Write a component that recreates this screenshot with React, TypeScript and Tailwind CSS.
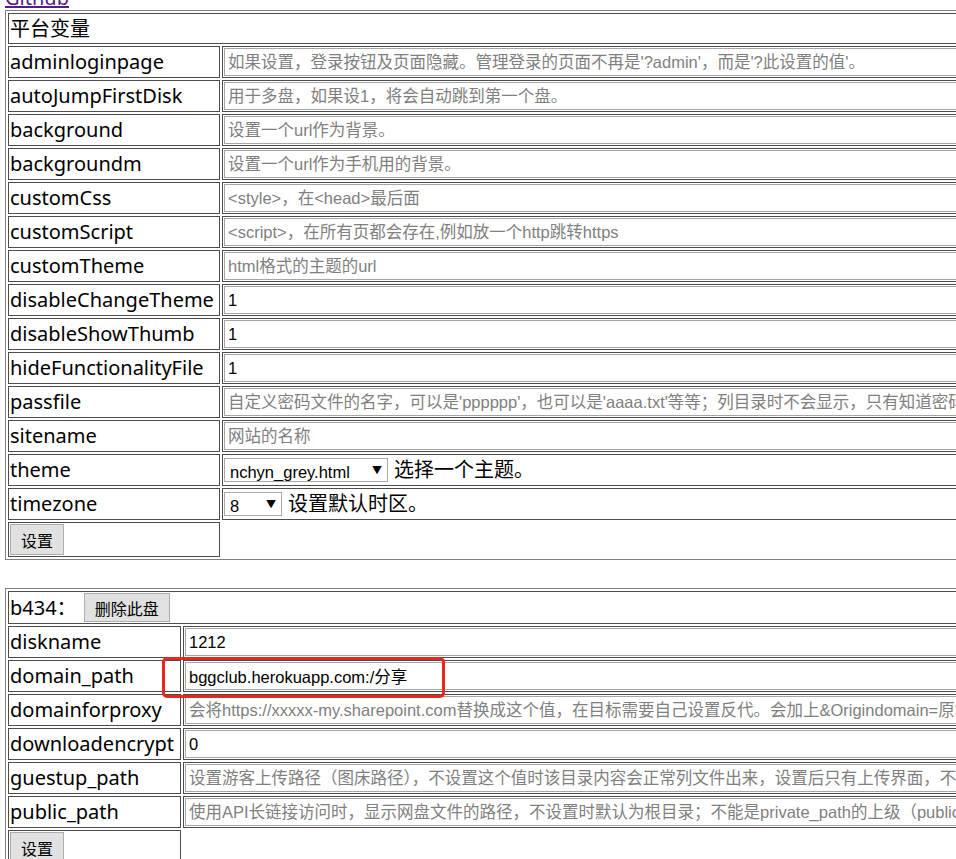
import * as React from 'react';

// types
type SettingRow = {
    name: string;
    value?: string;
    placeholder?: string;
};

const platformRows: SettingRow[] = [
    {
        name: 'adminloginpage',
        placeholder:
            "如果设置，登录按钮及页面隐藏。管理登录的页面不再是'?admin'，而是'?此设置的值'。"
    },
    {
        name: 'autoJumpFirstDisk',
        placeholder: '用于多盘，如果设1，将会自动跳到第一个盘。'
    },
    { name: 'background', placeholder: '设置一个url作为背景。' },
    { name: 'backgroundm', placeholder: '设置一个url作为手机用的背景。' },
    { name: 'customCss', placeholder: '<style>，在<head>最后面' },
    {
        name: 'customScript',
        placeholder: '<script>，在所有页都会存在,例如放一个http跳转https'
    },
    { name: 'customTheme', placeholder: 'html格式的主题的url' },
    { name: 'disableChangeTheme', value: '1' },
    { name: 'disableShowThumb', value: '1' },
    { name: 'hideFunctionalityFile', value: '1' },
    {
        name: 'passfile',
        placeholder:
            "自定义密码文件的名字，可以是'pppppp'，也可以是'aaaa.txt'等等；列目录时不会显示，只有知道密码才能查看或修改此文件。"
    },
    { name: 'sitename', placeholder: '网站的名称' }
];

const diskRows: SettingRow[] = [
    { name: 'diskname', value: '1212' },
    { name: 'domain_path', value: 'bggclub.herokuapp.com:/分享' },
    {
        name: 'domainforproxy',
        placeholder:
            '会将https://xxxxx-my.sharepoint.com替换成这个值，在目标需要自己设置反代。会加上&Origindomain=原域名。'
    },
    { name: 'downloadencrypt', value: '0' },
    {
        name: 'guestup_path',
        placeholder:
            '设置游客上传路径（图床路径），不设置这个值时该目录内容会正常列文件出来，设置后只有上传界面，不显示其中文件（登录后显示）。'
    },
    {
        name: 'public_path',
        placeholder:
            '使用API长链接访问时，显示网盘文件的路径，不设置时默认为根目录；不能是private_path的上级（public_path不能比private_path短）'
    }
];

const cellCls = 'border border-[#4d4d4d] p-px align-middle';
const labelFont = "font-['Noto_Sans','Noto_Sans_CJK_SC',sans-serif]";
const inputFont = "font-['Liberation_Sans','Noto_Sans_CJK_SC',sans-serif]";

function TextField({ value, placeholder }: { value?: string; placeholder?: string }) {
    return (
        <input
            type="text"
            defaultValue={value}
            placeholder={placeholder}
            className={`${inputFont} block h-[28px] w-[1100px] border border-[#a6a6a6] bg-white px-[3px] text-[16.5px] text-black outline-none placeholder:text-[#808080]`}
        />
    );
}

function FakeSelect({ value, width }: { value: string; width: string }) {
    return (
        <span className="relative inline-flex">
            <select
                defaultValue={value}
                className={`${inputFont} ${width} h-[24px] appearance-none border border-[#a9a9a9] bg-white pl-[5px] text-[16.5px] text-black`}>
                <option value={value}>{value}</option>
            </select>
            <span className="pointer-events-none absolute right-[6px] top-[5px] text-[10px] leading-[14px] text-black">
                ▼
            </span>
        </span>
    );
}

function WinButton({ label, height }: { label: string; height: string }) {
    return (
        <button
            type="button"
            className={`${height} border border-[#adadad] bg-[#e1e1e1] px-[10px] font-['Noto_Sans_CJK_SC',sans-serif] text-[16px] leading-none text-black`}>
            {label}
        </button>
    );
}

export default function App() {
    return (
        <div className={`${labelFont} relative h-[859px] w-[956px] overflow-hidden bg-white text-black`}>
            <div className="-mt-[16px] pl-[5px]">
                <a href="#" className="block h-[25px] w-fit text-[20px] leading-[27px] text-[#551a8b] underline">
                    Github
                </a>

                {/* platform variables */}
                <table className="mt-px border-separate border-spacing-[2px] border border-[#808080] text-[20px] leading-[26px]">
                    <tbody>
                        <tr>
                            <td colSpan={2} className={`${cellCls} h-[31px]`}>
                                平台变量
                            </td>
                        </tr>
                        {platformRows.map(row => (
                            <tr key={row.name}>
                                <td className={cellCls}>
                                    <div className="w-[208px] whitespace-nowrap">{row.name}</div>
                                </td>
                                <td className={cellCls}>
                                    <TextField value={row.value} placeholder={row.placeholder} />
                                </td>
                            </tr>
                        ))}
                        <tr>
                            <td className={cellCls}>theme</td>
                            <td className={cellCls}>
                                <div className="flex h-[28px] items-center gap-[6px]">
                                    <FakeSelect value="nchyn_grey.html" width="w-[164px]" />
                                    <span>选择一个主题。</span>
                                </div>
                            </td>
                        </tr>
                        <tr>
                            <td className={cellCls}>timezone</td>
                            <td className={cellCls}>
                                <div className="flex h-[28px] items-center gap-[6px]">
                                    <FakeSelect value="8" width="w-[58px]" />
                                    <span>设置默认时区。</span>
                                </div>
                            </td>
                        </tr>
                        <tr>
                            <td className={`${cellCls} h-[35px]`}>
                                <WinButton label="设置" height="h-[31px]" />
                            </td>
                            <td className="p-px" />
                        </tr>
                    </tbody>
                </table>

                {/* disk b434 */}
                <table className="mt-[28px] border-separate border-spacing-[2px] border border-[#808080] text-[20px] leading-[26px]">
                    <tbody>
                        <tr>
                            <td colSpan={2} className={cellCls}>
                                <div className="flex h-[29px] items-center gap-[7px]">
                                    <span>b434：</span>
                                    <WinButton label="删除此盘" height="h-[29px]" />
                                </div>
                            </td>
                        </tr>
                        {diskRows.map(row => (
                            <tr key={row.name}>
                                <td className={cellCls}>
                                    <div className="w-[169px] whitespace-nowrap">{row.name}</div>
                                </td>
                                <td className={cellCls}>
                                    <TextField value={row.value} placeholder={row.placeholder} />
                                </td>
                            </tr>
                        ))}
                        <tr>
                            <td className={`${cellCls} h-[35px]`}>
                                <WinButton label="设置" height="h-[31px]" />
                            </td>
                            <td className="p-px" />
                        </tr>
                    </tbody>
                </table>
            </div>

            {/* annotation */}
            <div className="pointer-events-none absolute left-[162px] top-[657px] h-[41px] w-[283px] rounded-[5px] border-[3px] border-[#e8271f]" />
        </div>
    );
}
